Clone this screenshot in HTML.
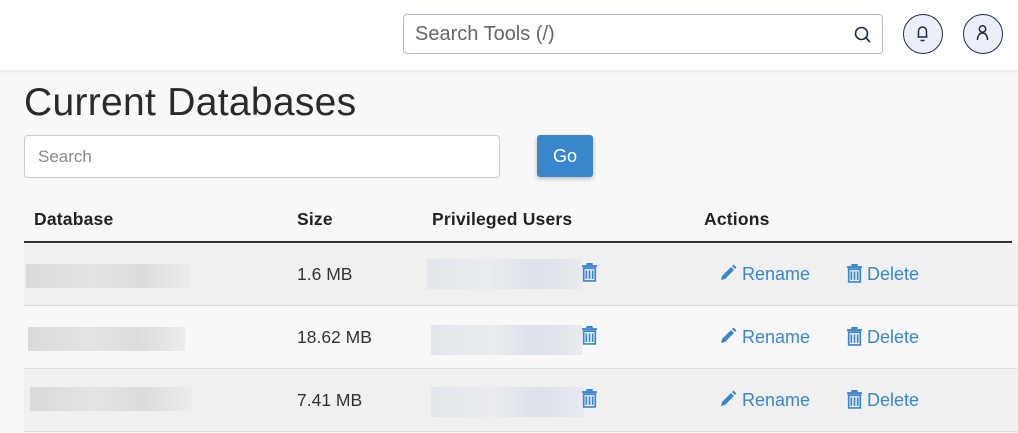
<!DOCTYPE html>
<html><head><style>
*{margin:0;padding:0;box-sizing:border-box}
body{width:1018px;height:433px;overflow:hidden;background:#f8f8f8;font-family:"Liberation Sans",sans-serif;color:#333;position:relative}
.hdr{position:absolute;left:0;top:0;width:1018px;height:70px;background:#fff;box-shadow:0 1px 4px rgba(0,0,0,.08)}
.st{position:absolute;left:403px;top:14px;width:480px;height:40px;border:1px solid #b5b9c9;border-radius:4px;background:#fff;font-size:20px;color:#666;padding:8px 11px}
.circ{position:absolute;top:14px;width:40px;height:40px;border-radius:50%;border:1.5px solid #1f2a4d;background:#eceefa}
.a{position:absolute;white-space:nowrap}
h1{position:absolute;left:24px;top:81px;font-weight:normal;font-size:39px;color:#2a2a2a;letter-spacing:.3px}
.srch{position:absolute;left:24px;top:135px;width:476px;height:43px;border:1px solid #ccc;border-radius:4px;background:#fff;font-size:17px;color:#888;padding:11px 13px}
.go{position:absolute;left:537px;top:135px;width:56px;height:42px;background:#3a86cc;border-radius:3px;color:#fff;font-size:18px;text-align:center;line-height:42px;box-shadow:0 2px 4px rgba(0,0,0,.25)}
.th{font-weight:bold;font-size:17.5px;color:#222;top:209px;letter-spacing:.2px}
.line{position:absolute;left:24px;width:988px}
.row{position:absolute;left:24px;width:994px;height:62px;border-bottom:1px solid #dcdcdc}
.sz{font-size:17.5px;left:297px}
.blur{position:absolute;height:24px;background:linear-gradient(90deg,#dadada,#e4e4e4 40%,#dcdcdc 70%,#ececec)}
.blu{position:absolute;height:30px;background:linear-gradient(90deg,#e3e6ec,#eaecef 40%,#dde1e9 70%,#e8eaee)}
.lk{color:#3a86cc;font-size:18px}
</style></head><body>
<div class="hdr">
<div class="st">Search Tools (/)
<svg style="position:absolute;right:9px;top:10px" width="20" height="20" viewBox="0 0 20 20" fill="none" stroke="#1f2a4d" stroke-width="1.6"><circle cx="8.5" cy="8.5" r="6"/><path d="M13 13l4 4"/></svg></div>
<div class="circ" style="left:903px"><svg width="37" height="37" viewBox="0 0 37 37" fill="none" stroke="#1f2a4d" stroke-width="1.5"><path d="M13.5 22h10M14.5 22v-6a4 4 0 0 1 8 0v6M16.5 25.5h4"/></svg></div>
<div class="circ" style="left:963px"><svg width="37" height="37" viewBox="0 0 37 37" fill="none" stroke="#1f2a4d" stroke-width="1.5"><circle cx="18.5" cy="14" r="3.2"/><path d="M13.5 25c0-4.5 2.2-7 5-7s5 2.5 5 7"/></svg></div>
</div>
<h1>Current Databases</h1>
<div class="srch">Search</div>
<div class="go">Go</div>
<div class="a th" style="left:34px">Database</div>
<div class="a th" style="left:297px">Size</div>
<div class="a th" style="left:432px">Privileged Users</div>
<div class="a th" style="left:704px">Actions</div>
<div class="line" style="top:241px;height:2px;background:#333"></div>

<div class="row" style="top:244px;background:#f0f0f0"></div>
<div class="row" style="top:307px;background:#f8f8f8"></div>
<div class="row" style="top:370px;background:#f0f0f0"></div>

<div class="blur" style="left:26px;top:264px;width:165px"></div>
<div class="blur" style="left:28px;top:327px;width:157px"></div>
<div class="blur" style="left:30px;top:387px;width:162px"></div>
<div class="blu" style="left:427px;top:259px;width:155px"></div>
<div class="blu" style="left:431px;top:325px;width:151px"></div>
<div class="blu" style="left:431px;top:387px;width:153px"></div>

<div class="a sz" style="top:264px">1.6 MB</div>
<div class="a sz" style="top:327px">18.62 MB</div>
<div class="a sz" style="top:390px">7.41 MB</div>

<svg width="0" height="0" style="position:absolute"><defs>
<symbol id="tr" viewBox="0 0 14 18"><rect x="0" y="2" width="14" height="2" fill="#3a86cc"/><rect x="4" y="0" width="6" height="2" fill="#3a86cc"/><path d="M1.5 5h11v12h-11z M4 7v8M7 7v8M10 7v8" fill="none" stroke="#3a86cc" stroke-width="1.6"/></symbol>
<symbol id="pn" viewBox="0 0 18 18"><path d="M2 16l1-4 9-9 3 3-9 9z M13 2l1.5-1.5 3 3L16 5z" fill="#3a86cc"/></symbol>
</defs></svg>

<svg class="a" style="left:582px;top:263px" width="15" height="19"><use href="#tr"/></svg>
<svg class="a" style="left:582px;top:326px" width="15" height="19"><use href="#tr"/></svg>
<svg class="a" style="left:582px;top:389px" width="15" height="19"><use href="#tr"/></svg>

<div class="a lk" style="left:719px;top:264px"><svg width="18" height="18" style="vertical-align:-2px"><use href="#pn"/></svg> Rename</div>
<div class="a lk" style="left:719px;top:327px"><svg width="18" height="18" style="vertical-align:-2px"><use href="#pn"/></svg> Rename</div>
<div class="a lk" style="left:719px;top:390px"><svg width="18" height="18" style="vertical-align:-2px"><use href="#pn"/></svg> Rename</div>
<div class="a lk" style="left:847px;top:264px"><svg width="15" height="19" style="vertical-align:-3px"><use href="#tr"/></svg> Delete</div>
<div class="a lk" style="left:847px;top:327px"><svg width="15" height="19" style="vertical-align:-3px"><use href="#tr"/></svg> Delete</div>
<div class="a lk" style="left:847px;top:390px"><svg width="15" height="19" style="vertical-align:-3px"><use href="#tr"/></svg> Delete</div>
</body></html>
